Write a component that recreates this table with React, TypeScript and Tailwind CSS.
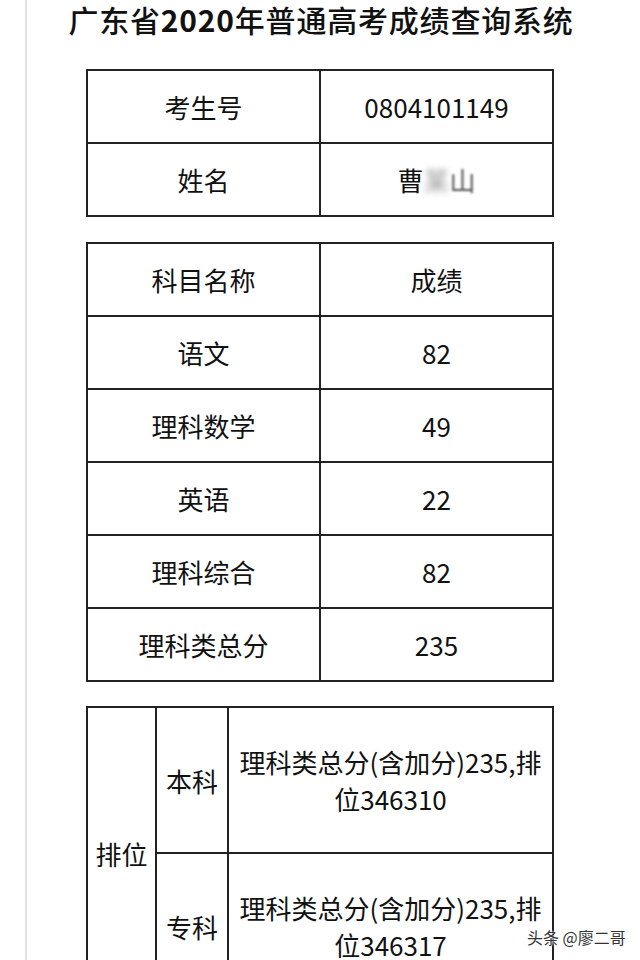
import React from "react";

const font = { fontFamily: '"Noto Sans CJK SC", "Noto Sans", sans-serif' };

const td = "border-2 border-[#222] text-center align-middle text-[26px] text-[#111] font-normal";

export default function App() {
  const scores: [string, string][] = [
    ["语文", "82"],
    ["理科数学", "49"],
    ["英语", "22"],
    ["理科综合", "82"],
    ["理科类总分", "235"],
  ];
  return (
    <div className="w-[640px] h-[960px] overflow-hidden bg-white relative" style={font}>
      <div className="ml-[25px] border-l-2 border-[#e2e2e2] min-h-[1010px]">
        <div className="pr-[25px] pt-[1px] text-center text-[30px] leading-[36px] text-[#111] font-medium tracking-[0.8px]">
          广东省<span className="font-bold">2020</span>年普通高考成绩查询系统
        </div>
        <div className="ml-[59px] w-[468px] pt-[32px]">
          <table className="w-full border-collapse table-fixed">
            <tbody>
              <tr className="h-[73px]">
                <td className={td + " w-[233px]"}>考生号</td>
                <td className={td}>0804101149</td>
              </tr>
              <tr className="h-[73px]">
                <td className={td}>姓名</td>
                <td className={td}>
                  <span>曹</span>
                  <span className="inline-block blur-[3px] text-[#9a9a9a]">某</span>
                  <span className="inline-block blur-[1px] text-[#555]">山</span>
                </td>
              </tr>
            </tbody>
          </table>
          <table className="w-full border-collapse table-fixed mt-[25px]">
            <tbody>
              <tr className="h-[73px]">
                <td className={td + " w-[233px]"}>科目名称</td>
                <td className={td}>成绩</td>
              </tr>
              {scores.map(([a, b]) => (
                <tr key={a} className="h-[73px]">
                  <td className={td}>{a}</td>
                  <td className={td}>{b}</td>
                </tr>
              ))}
            </tbody>
          </table>
          <table className="w-full border-collapse table-fixed mt-[24px]">
            <tbody>
              <tr className="h-[146px]">
                <td rowSpan={2} className={td + " w-[69px]"}>排位</td>
                <td className={td + " w-[72px]"}>本科</td>
                <td className={td + " leading-[37px] px-[10px]"}>理科类总分(含加分)235,排位346310</td>
              </tr>
              <tr className="h-[146px]">
                <td className={td}>专科</td>
                <td className={td + " leading-[37px] px-[10px]"}>理科类总分(含加分)235,排位346317</td>
              </tr>
            </tbody>
          </table>
        </div>
      </div>
      <div className="absolute left-[527px] top-[928px] text-[16px] leading-[18px] text-[#333]" style={{ textShadow: "0 0 2px #fff, 0 0 2px #fff" }}>
        头条 @廖二哥
      </div>
    </div>
  );
}
